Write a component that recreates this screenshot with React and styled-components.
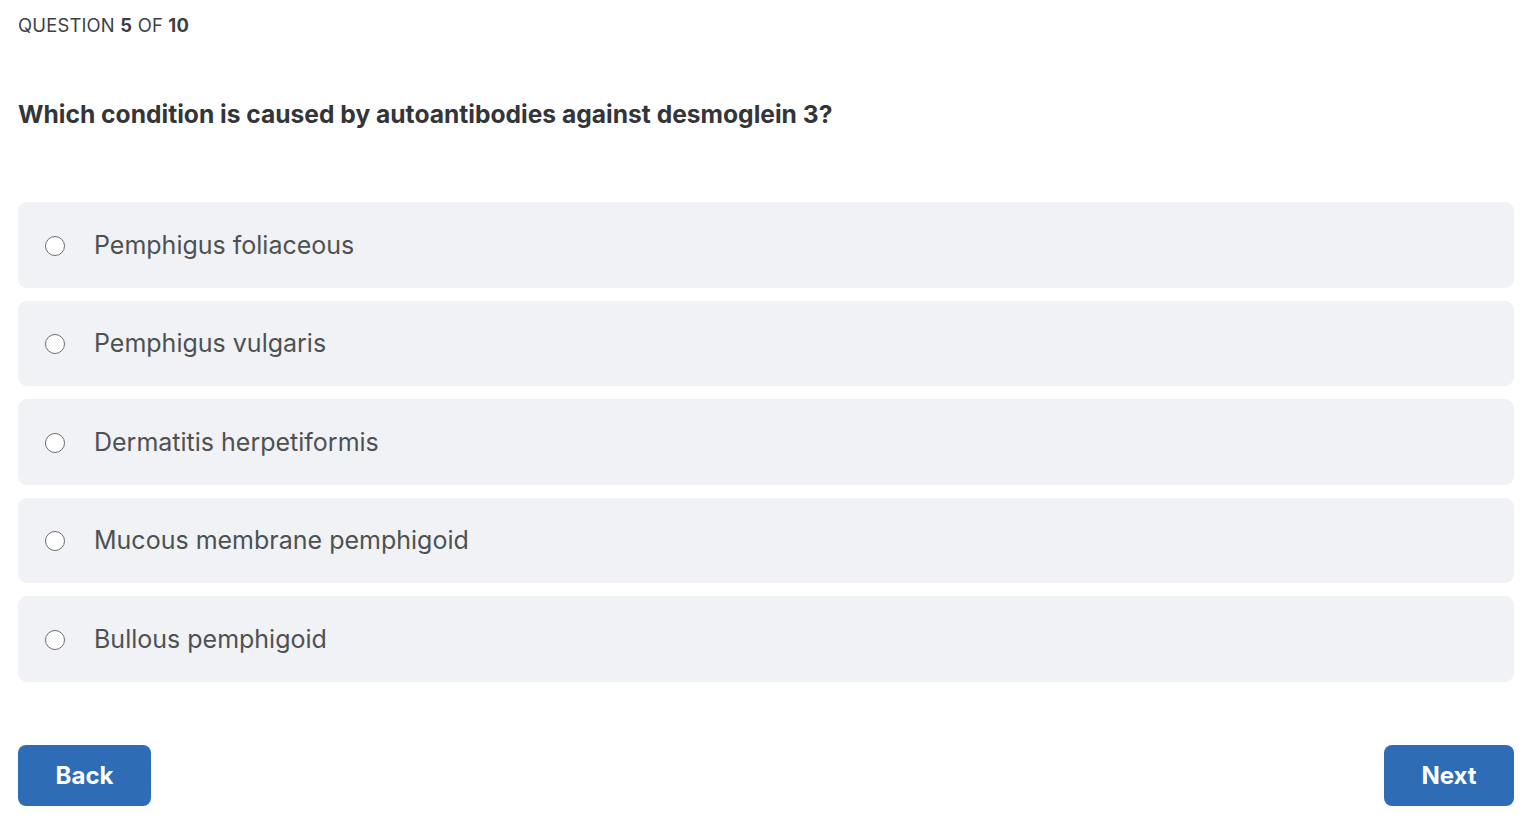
import { createGlobalStyle } from "styled-components";
import styled from "styled-components";

const GlobalStyle = createGlobalStyle`
  html, body {
    margin: 0;
    padding: 0;
    background: #ffffff;
    font-family: Inter, "Noto Sans", "Liberation Sans", sans-serif;
  }
`;

const Page = styled.div`
  padding: 14px 22px 0 18px;
`;

const Counter = styled.div`
  font-size: 18.4px;
  color: #3d3f44;
  letter-spacing: 0.2px;
  line-height: 22px;
  b {
    font-weight: 700;
  }
`;

const Question = styled.h2`
  margin: 63px 0 0;
  font-size: 24.6px;
  font-weight: 700;
  color: #333539;
  line-height: 30px;
`;

const Options = styled.div`
  margin-top: 73px;
  display: flex;
  flex-direction: column;
  gap: 13px;
`;

const Option = styled.label`
  display: flex;
  align-items: center;
  height: 85.5px;
  padding-left: 27px;
  background: #f1f2f5;
  border-radius: 9px;
  cursor: pointer;
`;

const Radio = styled.span`
  width: 20px;
  height: 20px;
  margin-top: 2px;
  border: 1.5px solid #6b6d72;
  border-radius: 50%;
  background: #fff;
  box-sizing: border-box;
  flex-shrink: 0;
`;

const OptionText = styled.span`
  margin-left: 29px;
  font-size: 25px;
  color: #4e5152;
`;

const Footer = styled.div`
  margin-top: 63px;
  display: flex;
  justify-content: space-between;
`;

const Button = styled.button`
  height: 61px;
  width: ${(p) => p.w}px;
  border: none;
  border-radius: 8px;
  background: #2e6db6;
  color: #fff;
  font-family: inherit;
  font-size: 24px;
  font-weight: 700;
  cursor: pointer;
`;

const answers = [
  "Pemphigus foliaceous",
  "Pemphigus vulgaris",
  "Dermatitis herpetiformis",
  "Mucous membrane pemphigoid",
  "Bullous pemphigoid",
];

export default function App() {
  return (
    <>
      <GlobalStyle />
      <Page>
        <Counter>
          QUESTION <b>5</b> OF <b>10</b>
        </Counter>
        <Question>
          Which condition is caused by autoantibodies against desmoglein 3?
        </Question>
        <Options>
          {answers.map((a) => (
            <Option key={a}>
              <Radio />
              <OptionText>{a}</OptionText>
            </Option>
          ))}
        </Options>
        <Footer>
          <Button w={133}>Back</Button>
          <Button w={130}>Next</Button>
        </Footer>
      </Page>
    </>
  );
}
